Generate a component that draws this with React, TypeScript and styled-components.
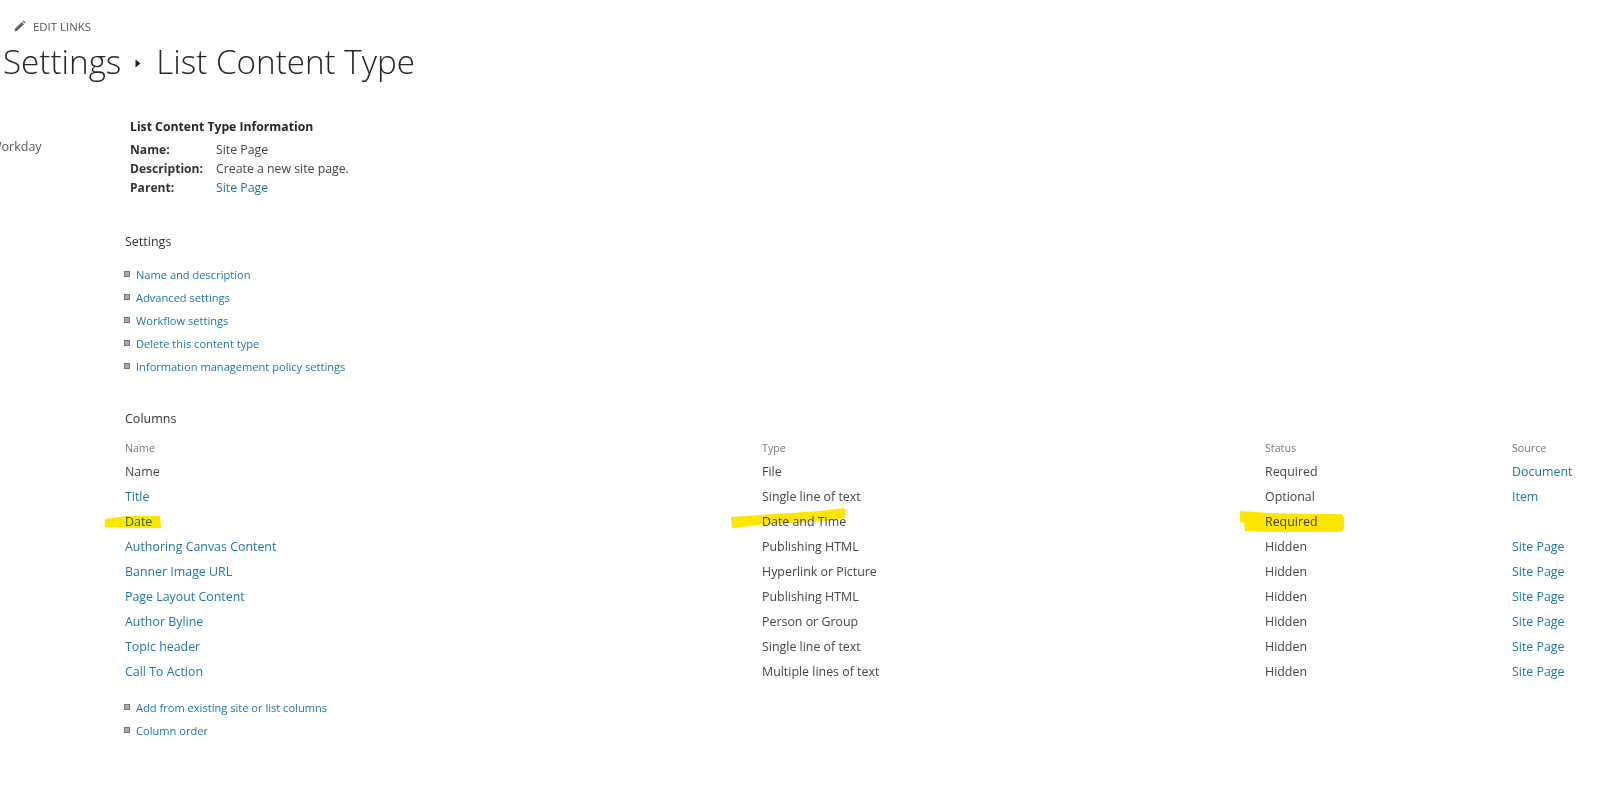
import { createGlobalStyle } from 'styled-components';
import styled from 'styled-components';

const GlobalStyle = createGlobalStyle`
  html, body { margin: 0; padding: 0; background: #fff; }
  body {
    font-family: "Open Sans", "Noto Sans", "Liberation Sans", sans-serif;
    font-size: 12.3px;
    color: #444;
    overflow: hidden;
  }
`;

const Page = styled.div`
  width: 1609px;
  height: 788px;
  overflow: hidden;
`;

const TopBar = styled.div`
  display: flex;
  align-items: center;
  gap: 7px;
  height: 18px;
  padding: 17px 0 0 14px;
  font-size: 11.4px;
  color: #555;
`;

const PageTitle = styled.h1`
  display: flex;
  align-items: center;
  margin: 2px 0 0 3px;
  height: 48px;
  font-size: 33.2px;
  font-weight: 300;
  color: #262626;
  white-space: nowrap;
`;

const Crumb = styled.svg`
  width: 6px;
  height: 9px;
  margin: 4px 15px 0 14px;
`;

const Body = styled.div`
  display: flex;
  margin-top: 33px;
`;

const Sidebar = styled.div`
  width: 125px;
  flex: none;
  overflow: hidden;
  padding-top: 20px;
`;

const SidebarItem = styled.div`
  margin-left: -10px;
  font-size: 12.5px;
  color: #555;
  white-space: nowrap;
`;

const Main = styled.div`
  flex: 1;
  min-width: 0;
`;

const InfoBlock = styled.div`
  padding-left: 5px;
`;

const InfoTitle = styled.div`
  font-weight: 700;
  font-size: 12.2px;
  color: #262626;
  line-height: 18px;
  margin-bottom: 5px;
`;

const InfoRow = styled.div`
  display: grid;
  grid-template-columns: 86px auto;
  line-height: 18.9px;
`;

const InfoLabel = styled.span`
  font-weight: 700;
  font-size: 12.1px;
  color: #333;
`;

const Link = styled.a`
  color: #1d76aa;
  text-decoration: none;
`;

const SectionTitle = styled.div<{ $top: number }>`
  margin-top: ${p => p.$top}px;
  font-size: 12.5px;
  line-height: 18px;
  color: #333;
`;

const ActionList = styled.ul<{ $top: number }>`
  list-style: none;
  margin: ${p => p.$top}px 0 0;
  padding: 0;
  font-size: 11.1px;
`;

const ActionItem = styled.li`
  display: flex;
  align-items: center;
  gap: 6px;
  height: 23px;
`;

const Bullet = styled.span`
  width: 4px;
  height: 4px;
  flex: none;
  margin-left: -1px;
  background: #aaa;
  border: 1px solid #777;
`;

const ColumnsGrid = styled.div`
  display: grid;
  grid-template-columns: 637px 503px 247px 1fr;
  margin-top: 11px;
`;

const HeadCell = styled.div`
  font-size: 10.7px;
  line-height: 18px;
  color: #777;
  margin-bottom: 2px;
`;

const Cell = styled.div`
  position: relative;
  height: 25px;
  line-height: 25px;
  white-space: nowrap;
  font-size: 12.4px;
`;

const Marker = styled.svg`
  position: absolute;
  mix-blend-mode: multiply;
`;

type Row = { name: string; nameLink: boolean; type: string; status: string; source?: string; mark?: boolean };

const rows: Row[] = [
  { name: 'Name', nameLink: false, type: 'File', status: 'Required', source: 'Document' },
  { name: 'Title', nameLink: true, type: 'Single line of text', status: 'Optional', source: 'Item' },
  { name: 'Date', nameLink: true, type: 'Date and Time', status: 'Required', mark: true },
  { name: 'Authoring Canvas Content', nameLink: true, type: 'Publishing HTML', status: 'Hidden', source: 'Site Page' },
  { name: 'Banner Image URL', nameLink: true, type: 'Hyperlink or Picture', status: 'Hidden', source: 'Site Page' },
  { name: 'Page Layout Content', nameLink: true, type: 'Publishing HTML', status: 'Hidden', source: 'Site Page' },
  { name: 'Author Byline', nameLink: true, type: 'Person or Group', status: 'Hidden', source: 'Site Page' },
  { name: 'Topic header', nameLink: true, type: 'Single line of text', status: 'Hidden', source: 'Site Page' },
  { name: 'Call To Action', nameLink: true, type: 'Multiple lines of text', status: 'Hidden', source: 'Site Page' },
];

const settingsLinks = [
  'Name and description',
  'Advanced settings',
  'Workflow settings',
  'Delete this content type',
  'Information management policy settings',
];

const columnLinks = ['Add from existing site or list columns', 'Column order'];

function NameMark() {
  return (
    <Marker style={{ left: -21, top: 6 }} width="58" height="14" viewBox="0 0 58 14">
      <path d="M1 4 L8 3 L22 1 L44 1 L56 1 L57 13 L30 13 L1 12 Q0 8 1 4 Z" fill="#ffe600" />
    </Marker>
  );
}

function TypeMark() {
  return (
    <Marker style={{ left: -32, top: -1 }} width="118" height="21" viewBox="0 0 118 21">
      <path d="M1 9 L30 7 L60 5 L90 3 L114 0 L116 2 L115 10 L95 13 L60 15 L30 17 L2 20 Z" fill="#ffe600" />
    </Marker>
  );
}

function StatusMark() {
  return (
    <Marker style={{ left: -26, top: 1 }} width="106" height="23" viewBox="0 0 106 23">
      <path d="M1 1 L30 3 L70 4 L102 4 Q105 5 105 9 L105 18 Q104 22 98 22 L30 22 L6 21 L5 13 L1 12 Z" fill="#ffe600" />
    </Marker>
  );
}

export default function App() {
  return (
    <Page>
      <GlobalStyle />
      <TopBar>
        <svg width="12" height="12" viewBox="0 0 12 12">
          <path d="M0.5 11.5 L1.2 8.6 L7.8 2 L10 4.2 L3.4 10.8 Z M8.6 1.2 L9.6 0.4 L11.6 2.4 L10.8 3.4 Z" fill="#666" />
        </svg>
        EDIT LINKS
      </TopBar>
      <PageTitle>
        Settings
        <Crumb viewBox="0 0 6 9">
          <path d="M0.5 0.5 L5.5 4.5 L0.5 8.5 Z" fill="#222" />
        </Crumb>
        List Content Type
      </PageTitle>
      <Body>
        <Sidebar>
          <SidebarItem>Workday</SidebarItem>
        </Sidebar>
        <Main>
          <InfoBlock>
            <InfoTitle>List Content Type Information</InfoTitle>
            <InfoRow>
              <InfoLabel>Name:</InfoLabel>
              <span>Site Page</span>
            </InfoRow>
            <InfoRow>
              <InfoLabel>Description:</InfoLabel>
              <span>Create a new site page.</span>
            </InfoRow>
            <InfoRow>
              <InfoLabel>Parent:</InfoLabel>
              <Link href="#">Site Page</Link>
            </InfoRow>
          </InfoBlock>
          <SectionTitle $top={35}>Settings</SectionTitle>
          <ActionList $top={12}>
            {settingsLinks.map(label => (
              <ActionItem key={label}>
                <Bullet />
                <Link href="#">{label}</Link>
              </ActionItem>
            ))}
          </ActionList>
          <SectionTitle $top={32}>Columns</SectionTitle>
          <ColumnsGrid>
            <HeadCell>Name</HeadCell>
            <HeadCell>Type</HeadCell>
            <HeadCell>Status</HeadCell>
            <HeadCell>Source</HeadCell>
            {rows.map(row => (
              <div key={row.name} style={{ display: 'contents' }}>
                <Cell>
                  {row.nameLink ? <Link href="#">{row.name}</Link> : row.name}
                  {row.mark && <NameMark />}
                </Cell>
                <Cell>
                  {row.type}
                  {row.mark && <TypeMark />}
                </Cell>
                <Cell>
                  {row.status}
                  {row.mark && <StatusMark />}
                </Cell>
                <Cell>{row.source && <Link href="#">{row.source}</Link>}</Cell>
              </div>
            ))}
          </ColumnsGrid>
          <ActionList $top={12}>
            {columnLinks.map(label => (
              <ActionItem key={label}>
                <Bullet />
                <Link href="#">{label}</Link>
              </ActionItem>
            ))}
          </ActionList>
        </Main>
      </Body>
    </Page>
  );
}
